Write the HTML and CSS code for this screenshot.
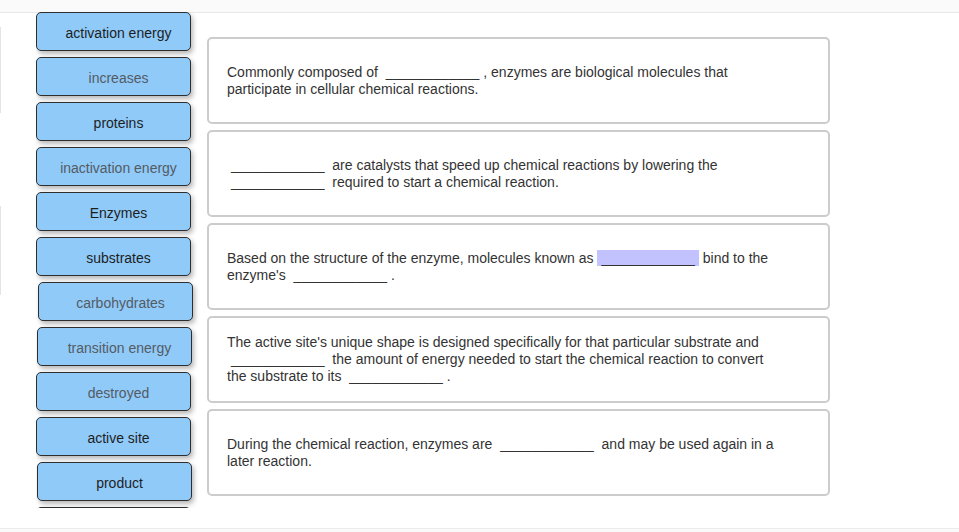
FILE: index.html
```html
<!DOCTYPE html>
<html lang="en">
<head>
<meta charset="utf-8">
<title>Enzymes drag and drop</title>
<link rel="stylesheet" href="styles.css">
</head>
<body>
<div class="page">
  <header class="topbar"></header>
  <main class="workspace">
    <div class="gutter">
      <span class="gutter-mark mark-a"></span>
      <span class="gutter-mark mark-b"></span>
    </div>
    <div class="tiles">
      <div class="tile tile-dark">activation energy</div>
      <div class="tile tile-gray">increases</div>
      <div class="tile tile-dark">proteins</div>
      <div class="tile tile-gray">inactivation energy</div>
      <div class="tile tile-dark">Enzymes</div>
      <div class="tile tile-dark">substrates</div>
      <div class="tile tile-gray shift-2">carbohydrates</div>
      <div class="tile tile-gray shift-1">transition energy</div>
      <div class="tile tile-gray">destroyed</div>
      <div class="tile tile-dark">active site</div>
      <div class="tile tile-dark shift-1">product</div>
      <div class="tile tile-dark">&nbsp;</div>
    </div>
    <div class="panels">
      <div class="panel"><p class="panel-text">Commonly composed of <span class="blank">____________</span>, enzymes are biological molecules that participate in cellular chemical reactions.</p></div>
      <div class="panel"><p class="panel-text"><span class="blank">____________</span> are catalysts that speed up chemical reactions by lowering the <span class="blank">____________</span> required to start a chemical reaction.</p></div>
      <div class="panel"><p class="panel-text">Based on the structure of the enzyme, molecules known as <span class="blank blank-active">____________</span> bind to the enzyme's <span class="blank">____________</span>.</p></div>
      <div class="panel"><p class="panel-text">The active site's unique shape is designed specifically for that particular substrate and <span class="blank">____________</span> the amount of energy needed to start the chemical reaction to convert the substrate to its <span class="blank">____________</span>.</p></div>
      <div class="panel"><p class="panel-text">During the chemical reaction, enzymes are <span class="blank">____________</span> and may be used again in a later reaction.</p></div>
    </div>
  </main>
  <footer class="bottombar"></footer>
</div>
</body>
</html>
```

FILE: styles.css
```css
* { box-sizing: border-box; }

html, body {
  margin: 0;
  padding: 0;
  background: #ffffff;
  font-family: "Liberation Sans", Arial, sans-serif;
  font-size: 14px;
}

.page {
  width: 959px;
  height: 532px;
  display: flex;
  flex-direction: column;
  overflow: hidden;
}

.topbar {
  height: 13px;
  flex: none;
  background: #fafafa;
  border-bottom: 1px solid #e8e8e8;
}

.workspace {
  height: 516px;
  flex: none;
  display: flex;
  align-items: flex-start;
  border-bottom: 1px solid #ececec;
  background: #ffffff;
}

.bottombar {
  flex: 1;
  background: #fafafa;
}

.gutter {
  width: 1px;
  flex: none;
  display: flex;
  flex-direction: column;
  margin-right: 35px;
}

.gutter-mark {
  display: block;
  width: 1px;
  background: #e4e4e4;
}

.mark-a { margin-top: 14px; height: 86px; }
.mark-b { margin-top: 93px; height: 89px; }

.tiles {
  width: 168px;
  height: 496px;
  margin-top: -1px;
  flex: none;
  overflow: hidden;
  display: flex;
  flex-direction: column;
  gap: 6px;
}

.tile {
  width: 155px;
  height: 39px;
  flex: none;
  display: flex;
  align-items: center;
  justify-content: center;
  padding-left: 10px;
  padding-top: 2px;
  background: #90caf9;
  border: 1px solid #2e2e2e;
  border-radius: 5px;
  box-shadow: 2px 3px 5px rgba(0, 0, 0, 0.28);
  font-size: 14px;
  white-space: nowrap;
}

.tile-dark { color: #1e1e1e; }
.tile-gray { color: #545b63; }

.shift-1 { margin-left: 1px; }
.shift-2 { margin-left: 2px; }

.panels {
  width: 623px;
  flex: none;
  margin-left: 3px;
  padding-top: 24px;
  display: flex;
  flex-direction: column;
  gap: 6px;
}

.panel {
  height: 87px;
  display: flex;
  align-items: center;
  padding-left: 18px;
  border: 2px solid #cccccc;
  border-radius: 5px;
  background: #ffffff;
}

.panel-text {
  margin: 0;
  width: 558px;
  color: #333333;
  font-size: 14px;
  line-height: 17px;
}

.blank {
  padding: 0 4px;
  color: #333333;
  white-space: nowrap;
}

.blank-active {
  background: #c2c2ff;
}
```
